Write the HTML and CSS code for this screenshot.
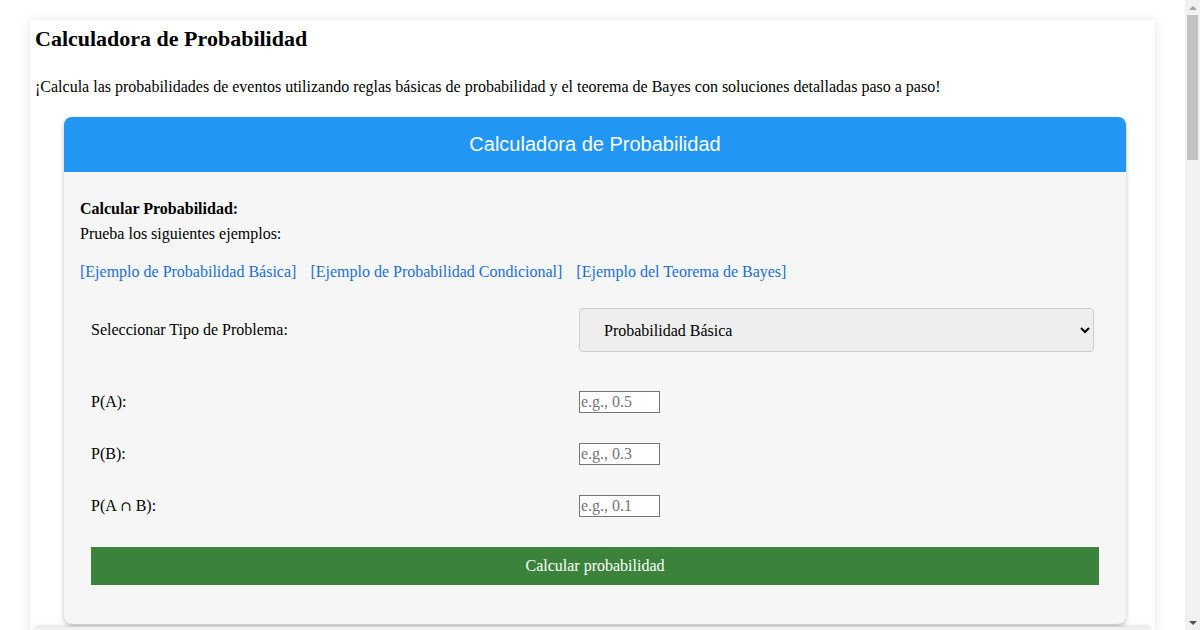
FILE: index.html
```html
<!DOCTYPE html>
<html lang="es">
<head>
<meta charset="utf-8">
<title>Calculadora de Probabilidad</title>
<link rel="stylesheet" href="styles.css">
</head>
<body>
<div class="page">
  <h2 class="page-title">Calculadora de Probabilidad</h2>
  <p class="intro">¡Calcula las probabilidades de eventos utilizando reglas básicas de probabilidad y el teorema de Bayes con soluciones detalladas paso a paso!</p>
  <div class="card">
    <div class="card-header">Calculadora de Probabilidad</div>
    <div class="card-body">
      <div class="section-title">Calcular Probabilidad:</div>
      <div class="section-sub">Prueba los siguientes ejemplos:</div>
      <div class="examples">
        <a href="#" class="example">[Ejemplo de Probabilidad Básica]</a>
        <a href="#" class="example">[Ejemplo de Probabilidad Condicional]</a>
        <a href="#" class="example">[Ejemplo del Teorema de Bayes]</a>
      </div>
      <form class="form">
        <div class="row row-select">
          <label class="label">Seleccionar Tipo de Problema:</label>
          <select class="select">
            <option>Probabilidad Básica</option>
            <option>Probabilidad Condicional</option>
            <option>Teorema de Bayes</option>
          </select>
        </div>
        <div class="row">
          <label class="label">P(A):</label>
          <input class="input" type="text" placeholder="e.g., 0.5">
        </div>
        <div class="row">
          <label class="label">P(B):</label>
          <input class="input" type="text" placeholder="e.g., 0.3">
        </div>
        <div class="row">
          <label class="label">P(A <span class="sym">∩</span> B):</label>
          <input class="input" type="text" placeholder="e.g., 0.1">
        </div>
        <button type="button" class="submit">Calcular probabilidad</button>
      </form>
    </div>
  </div>
  <div class="next-block"></div>
</div>
<div class="scrollbar" aria-hidden="true">
  <div class="sb-arrow sb-up"></div>
  <div class="sb-track"><div class="sb-thumb"></div></div>
  <div class="sb-arrow sb-down"></div>
</div>
</body>
</html>
```

FILE: styles.css
```css
html, body {
  margin: 0;
  padding: 0;
}
body {
  font-family: "Liberation Serif", "Times New Roman", serif;
  font-size: 16px;
  color: #000;
  background: #fff;
  margin-right: 15px;
}
.page {
  width: 1115px;
  margin: 20px auto 0;
  padding: 5px 5px 40px;
  background: #fff;
  box-shadow: 0 0 10px rgba(0, 0, 0, 0.1);
}
.page-title {
  font-size: 22px;
  font-weight: bold;
  margin: 0 0 25px;
  line-height: 28px;
}
.intro {
  margin: 0 0 21px;
  line-height: 18px;
}
.card {
  width: 1062px;
  margin: 0 0 0 29px;
  border-radius: 8px;
  background: #f6f6f6;
  box-shadow: 0 2px 5px rgba(0, 0, 0, 0.25);
  overflow: hidden;
}
.card-header {
  background: #2196f3;
  color: #fff;
  font-family: "Liberation Sans", Arial, sans-serif;
  font-size: 20px;
  height: 55px;
  line-height: 55px;
  text-align: center;
}
.card-body {
  padding: 28px 16px 39px;
}
.section-title {
  font-weight: bold;
  line-height: 18px;
  margin-bottom: 7px;
}
.section-sub {
  line-height: 18px;
}
.examples {
  display: flex;
  gap: 14px;
  margin-top: 20px;
  line-height: 18px;
}
.example {
  color: #1a6fd4;
  text-decoration: none;
}
.form {
  margin-top: 27px;
  padding: 0 11px;
  display: flex;
  flex-direction: column;
  gap: 30px;
}
.row {
  display: grid;
  grid-template-columns: 488px 515px;
  align-items: center;
}
.row-select {
  margin-bottom: 9px;
}
.label {
  line-height: 18px;
}
.sym {
  font-family: "DejaVu Serif", serif;
  font-size: 14px;
}
.select {
  width: 515px;
  height: 44px;
  padding: 0 20px;
  font-family: "Liberation Serif", "Times New Roman", serif;
  font-size: 16px;
  color: #000;
  background: #eee;
  border: 1px solid #ccc;
  border-radius: 4px;
}
.input {
  width: 81px;
  height: 22px;
  box-sizing: border-box;
  padding: 1px 1px;
  font-family: "Liberation Serif", "Times New Roman", serif;
  font-size: 16px;
  border: 1px solid #767676;
  background: #fff;
}
.input::placeholder {
  color: #757575;
}
.submit {
  width: 1008px;
  height: 38px;
  border: none;
  background: #3b833b;
  color: #fff;
  font-family: "Liberation Serif", "Times New Roman", serif;
  font-size: 16px;
  cursor: pointer;
}
.next-block {
  height: 200px;
  margin-top: 3px;
  background: #f0f0f0;
  box-shadow: 0 -1px 4px rgba(0, 0, 0, 0.15);
}
.scrollbar {
  position: fixed;
  top: 0;
  right: 0;
  width: 15px;
  height: 100vh;
  background: #f1f1f1;
  display: flex;
  flex-direction: column;
}
.sb-arrow {
  height: 15px;
  display: flex;
  align-items: center;
  justify-content: center;
}
.sb-up::before {
  content: "";
  border-left: 4px solid transparent;
  border-right: 4px solid transparent;
  border-bottom: 4px solid #a3a3a3;
}
.sb-down::before {
  content: "";
  border-left: 4px solid transparent;
  border-right: 4px solid transparent;
  border-top: 4px solid #505050;
}
.sb-track {
  flex: 1;
  padding: 0 2px;
}
.sb-thumb {
  height: 145px;
  background: #c1c1c1;
}
```
